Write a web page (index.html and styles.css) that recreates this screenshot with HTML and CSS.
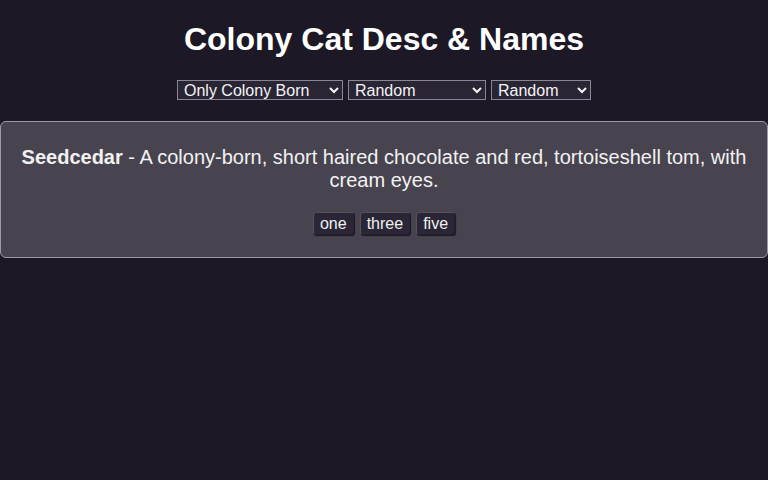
FILE: index.html
```html
<!DOCTYPE html>
<html>
<head>
<meta charset="utf-8">
<link rel="stylesheet" href="styles.css">
</head>
<body>
<h1 class="title">Colony Cat Desc &amp; Names</h1>
<div class="controls">
  <select class="sel sel-origin"><option>Only Colony Born</option></select>
  <select class="sel sel-mid"><option>Random</option></select>
  <select class="sel sel-last"><option>Random</option></select>
</div>
<div class="card">
  <p class="desc"><b>Seedcedar</b> - A colony-born, short haired chocolate and red, tortoiseshell tom, with cream eyes.</p>
  <div class="buttons">
    <button class="btn">one</button>
    <button class="btn">three</button>
    <button class="btn">five</button>
  </div>
</div>
</body>
</html>
```
FILE: styles.css
```css
html, body {
  margin: 0;
  padding: 0;
  background: #1c1826;
  color: #f2f2f2;
  font-family: "Liberation Sans", Arial, sans-serif;
}
.title {
  margin: 21px 0 22px;
  text-align: center;
  font-size: 32px;
  line-height: 37px;
  color: #ffffff;
}
.controls {
  display: flex;
  justify-content: center;
  gap: 5px;
  height: 20px;
}
.sel {
  height: 20px;
  box-sizing: border-box;
  background: #2a2535;
  color: #f4f4f4;
  border: 1px solid #8a8792;
  border-radius: 0;
  font-family: "Liberation Sans", Arial, sans-serif;
  font-size: 16px;
  padding: 0 2px;
}
.sel-origin { width: 166px; }
.sel-mid { width: 138px; }
.sel-last { width: 100px; }
.card {
  margin-top: 21px;
  background: #48444f;
  border: 1px solid #9c9aa2;
  border-radius: 6px;
  padding: 4px 15px 22px;
  text-align: center;
}
.desc {
  margin: 20px 0 20px;
  font-size: 20px;
  line-height: 23px;
  color: #f2f2f2;
}
.buttons {
  display: flex;
  justify-content: center;
  gap: 6px;
}
.btn {
  height: 23px;
  box-sizing: border-box;
  background: #2a2636;
  color: #f0f0f0;
  border: 1px solid #55515f;
  border-right-color: #24202e;
  border-bottom-color: #24202e;
  border-radius: 3px;
  box-shadow: 1px 1px 1px #1c1826;
  font-family: "Liberation Sans", Arial, sans-serif;
  font-size: 16px;
  padding: 0 6px;
}
```
